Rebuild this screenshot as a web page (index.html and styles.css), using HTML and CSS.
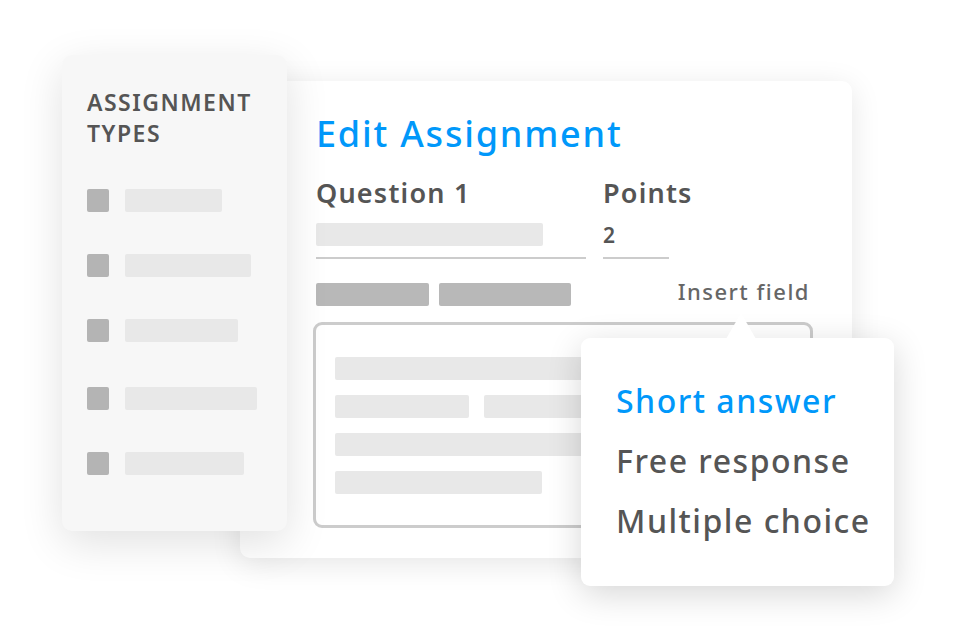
FILE: index.html
```html
<!DOCTYPE html>
<html>
<head>
<meta charset="utf-8">
<link rel="stylesheet" href="styles.css">
</head>
<body>
<div class="stage">
  <div class="editor">
    <h1 class="title">Edit Assignment</h1>
    <div class="fields">
      <div class="field">
        <div class="label">Question 1</div>
        <div class="input"><span class="bar bar-q"></span></div>
      </div>
      <div class="field">
        <div class="label">Points</div>
        <div class="input"><span class="value">2</span></div>
      </div>
    </div>
    <div class="toolbar">
      <span class="tool tool-a"></span>
      <span class="tool tool-b"></span>
      <span class="insert">Insert field</span>
    </div>
    <div class="textbox">
      <span class="line line-full"></span>
      <div class="line-pair">
        <span class="line line-a"></span>
        <span class="line line-b"></span>
      </div>
      <span class="line line-full"></span>
      <span class="line line-short"></span>
    </div>
  </div>

  <div class="types">
    <div class="types-title">ASSIGNMENT<br>TYPES</div>
    <ul class="type-list">
      <li class="type"><span class="check"></span><span class="type-bar" style="width:97px"></span></li>
      <li class="type"><span class="check"></span><span class="type-bar" style="width:126px"></span></li>
      <li class="type"><span class="check"></span><span class="type-bar" style="width:113px"></span></li>
      <li class="type"><span class="check"></span><span class="type-bar" style="width:132px"></span></li>
      <li class="type"><span class="check"></span><span class="type-bar" style="width:119px"></span></li>
    </ul>
  </div>

  <div class="menu">
    <div class="menu-item active">Short answer</div>
    <div class="menu-item">Free response</div>
    <div class="menu-item">Multiple choice</div>
  </div>
</div>
</body>
</html>
```

FILE: styles.css
```css
* { box-sizing: border-box; }
html, body { margin: 0; padding: 0; background: #ffffff; }
body {
  width: 960px;
  height: 640px;
  overflow: hidden;
  font-family: "Noto Sans", "DejaVu Sans", sans-serif;
  color: #555555;
}
.stage {
  position: relative;
  width: 960px;
  height: 640px;
}

/* main editor card */
.editor {
  position: absolute;
  left: 240px;
  top: 81px;
  width: 612px;
  height: 477px;
  background: #ffffff;
  border-radius: 10px;
  box-shadow: 0 6px 30px rgba(0, 0, 0, 0.10);
  padding: 28px 39px 0 76px;
  display: flex;
  flex-direction: column;
}
.title {
  margin: 0;
  font-size: 36px;
  line-height: 50px;
  font-weight: 500;
  color: #0098fa;
  letter-spacing: 1.8px;
  white-space: nowrap;
}
.fields {
  display: grid;
  grid-template-columns: 270px 66px;
  column-gap: 17px;
  margin-top: 17px;
}
.label {
  font-size: 27px;
  line-height: 34px;
  font-weight: 600;
  color: #555555;
  letter-spacing: 1.2px;
  white-space: nowrap;
}
.input {
  height: 49px;
  border-bottom: 2px solid #cccccc;
  padding-top: 13px;
}
.bar-q {
  display: block;
  width: 227px;
  height: 23px;
  background: #e8e8e8;
  border-radius: 2px;
}
.value {
  display: block;
  font-size: 21px;
  line-height: 24px;
  font-weight: 600;
  color: #555555;
}
.toolbar {
  display: flex;
  align-items: flex-start;
  gap: 10px;
  margin-top: 24px;
  height: 23px;
}
.tool {
  display: block;
  height: 23px;
  background: #b8b8b8;
  border-radius: 2px;
}
.tool-a { width: 113px; }
.tool-b { width: 132px; }
.insert {
  margin-left: auto;
  margin-right: 3px;
  font-size: 22px;
  line-height: 17px;
  font-weight: 500;
  color: #666666;
  letter-spacing: 1.5px;
  white-space: nowrap;
}
.textbox {
  margin: 16px 0 0 -3px;
  width: 500px;
  height: 206px;
  border: 3px solid #cccccc;
  border-radius: 9px;
  padding: 32px 0 0 19px;
  display: flex;
  flex-direction: column;
  gap: 15px;
}
.line {
  display: block;
  height: 23px;
  background: #e8e8e8;
  border-radius: 2px;
}
.line-full { width: 450px; }
.line-pair { display: flex; gap: 15px; }
.line-a { width: 134px; }
.line-b { width: 300px; }
.line-short { width: 207px; }

/* left types panel */
.types {
  position: absolute;
  left: 62px;
  top: 55px;
  width: 225px;
  height: 476px;
  background: #f7f7f7;
  border-radius: 10px;
  box-shadow: 0 12px 44px rgba(0, 0, 0, 0.12);
  padding: 32px 0 0 25px;
}
.types-title {
  font-size: 23px;
  line-height: 31px;
  font-weight: 600;
  letter-spacing: 1.5px;
  color: #555555;
}
.type-list {
  list-style: none;
  margin: 40px 0 0;
  padding: 0;
  display: flex;
  flex-direction: column;
  gap: 42px;
}
.type {
  display: flex;
  align-items: center;
  gap: 16px;
  height: 23px;
}
.type:nth-child(4) { margin-top: 3px; }
.check {
  display: block;
  width: 22px;
  height: 23px;
  background: #b4b4b4;
  border-radius: 2px;
}
.type-bar {
  display: block;
  height: 23px;
  background: #e8e8e8;
  border-radius: 2px;
}

/* insert-field menu */
.menu {
  position: absolute;
  left: 581px;
  top: 338px;
  width: 313px;
  height: 248px;
  background: #ffffff;
  border-radius: 9px;
  box-shadow: 0 8px 34px rgba(0, 0, 0, 0.16);
  padding: 33px 0 0 35px;
  display: flex;
  flex-direction: column;
}
.menu::before {
  content: "";
  position: absolute;
  left: 145px;
  top: -25px;
  width: 0;
  height: 0;
  border-left: 15px solid transparent;
  border-right: 15px solid transparent;
  border-bottom: 26px solid #ffffff;
}
.menu-item {
  font-size: 32px;
  line-height: 60px;
  font-weight: 500;
  color: #555555;
  letter-spacing: 1.5px;
  white-space: nowrap;
}
.menu-item.active { color: #0098fa; }
```
